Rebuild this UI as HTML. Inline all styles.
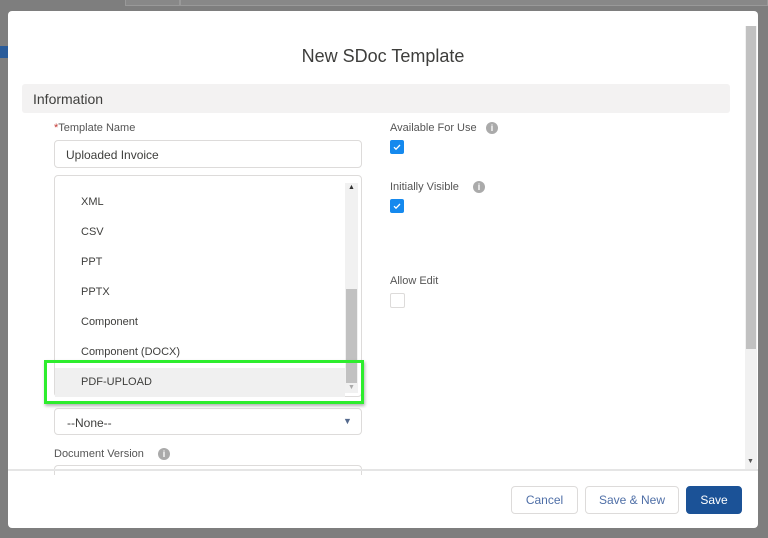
<!DOCTYPE html>
<html><head><style>
*{box-sizing:border-box;margin:0;padding:0}
body{width:768px;height:538px;background:#7e7e7e;font-family:"Liberation Sans",sans-serif;position:relative;overflow:hidden;color:#3e3e3c}
.a{position:absolute}
.modal{left:8px;top:11px;width:750px;height:517px;background:#fff;border-radius:4px}
.lbl{font-size:11px;color:#54698d;color:#555}
.cb{width:14px;height:14px;border-radius:2px;background:#1589ee}
.cb svg{display:block}
.info{width:12px;height:12px;border-radius:50%;background:#aaa;color:#fff;font-size:9px;font-weight:bold;text-align:center;line-height:12px}
.opt{left:81px;font-size:11px;color:#3e3e3c}
.btn{height:28px;border:1px solid #dddbda;border-radius:4px;background:#fff;color:#0070d2;font-size:12px;text-align:center;line-height:26px;color:#4f6fa7}
</style></head><body>
<div class="a" style="left:125px;top:0;width:55px;height:6px;border:1px solid #999;border-top:none;background:#888"></div>
<div class="a" style="left:180px;top:0;width:588px;height:6px;border:1px solid #999;border-top:none;background:#888"></div>
<div class="a modal"></div>
<div class="a" style="left:0;top:46px;width:8px;height:12px;background:#2a5c9a"></div>
<div class="a" style="left:8px;top:46px;width:750px;text-align:center;font-size:18px;color:#3e3e3c">New SDoc Template</div>
<div class="a" style="left:22px;top:84px;width:708px;height:29px;background:#f3f2f2;border-radius:3px"></div>
<div class="a" style="left:33px;top:91px;font-size:14px;color:#3e3e3c">Information</div>
<div class="a" style="left:745px;top:26px;width:12px;height:444px;background:#f1f1f1"></div>
<div class="a" style="left:746px;top:26px;width:10px;height:323px;background:#c1c1c1"></div>
<div class="a" style="left:747px;top:458px;font-size:7px;color:#555">▼</div>
<div class="a lbl" style="left:54px;top:122px"><span style="color:#c23934">*</span>Template Name</div>
<div class="a" style="left:54px;top:140px;width:308px;height:28px;border:1px solid #dddbda;border-radius:4px;font-size:12px;padding:7px 0 0 11px;color:#3e3e3c">Uploaded Invoice</div>
<div class="a" style="left:54px;top:175px;width:308px;height:222px;border:1px solid #dddbda;border-radius:4px;background:#fff"></div>
<div class="a" style="left:345px;top:183px;width:13px;height:210px;background:#f1f1f1"></div>
<div class="a" style="left:346px;top:289px;width:11px;height:94px;background:#c1c1c1"></div>
<div class="a" style="left:348px;top:184px;font-size:7px;color:#333">▲</div>
<div class="a" style="left:348px;top:384px;font-size:7px;color:#aaa">▼</div>
<div class="a opt" style="top:196px">XML</div>
<div class="a opt" style="top:226px">CSV</div>
<div class="a opt" style="top:256px">PPT</div>
<div class="a opt" style="top:286px">PPTX</div>
<div class="a opt" style="top:316px">Component</div>
<div class="a opt" style="top:346px">Component (DOCX)</div>
<div class="a" style="left:55px;top:368px;width:290px;height:29px;background:#f0f0f0"></div>
<div class="a opt" style="top:376px">PDF-UPLOAD</div>
<div class="a" style="left:44px;top:360px;width:320px;height:44px;border:3px solid #2ded2d;box-shadow:1px 2px 3px rgba(0,0,0,.3)"></div>
<div class="a" style="left:54px;top:408px;width:308px;height:27px;border:1px solid #dddbda;border-radius:4px;font-size:12px;padding:7px 0 0 12px;color:#3e3e3c">--None--</div>
<div class="a" style="left:343px;top:416px;font-size:9px;color:#54698d">▼</div>
<div class="a lbl" style="left:54px;top:448px">Document Version</div>
<div class="a info" style="left:158px;top:448px">i</div>
<div class="a" style="left:54px;top:465px;width:308px;height:10px;border:1px solid #dddbda;border-bottom:none;border-radius:4px 4px 0 0"></div>
<div class="a lbl" style="left:390px;top:122px">Available For Use</div>
<div class="a info" style="left:486px;top:122px">i</div>
<div class="a cb" style="left:390px;top:140px"><svg width="14" height="14"><path d="M4 7.2l2 2 4-4.2" stroke="#fff" stroke-width="1.3" fill="none"/></svg></div>
<div class="a lbl" style="left:390px;top:181px">Initially Visible</div>
<div class="a info" style="left:473px;top:181px">i</div>
<div class="a cb" style="left:390px;top:199px"><svg width="14" height="14"><path d="M4 7.2l2 2 4-4.2" stroke="#fff" stroke-width="1.3" fill="none"/></svg></div>
<div class="a lbl" style="left:390px;top:275px">Allow Edit</div>
<div class="a" style="left:390px;top:293px;width:15px;height:15px;border:1px solid #dddbda;border-radius:2px"></div>
<div class="a" style="left:8px;top:469px;width:750px;height:2px;background:#e5e5e5"></div>
<div class="a btn" style="left:511px;top:486px;width:67px">Cancel</div>
<div class="a btn" style="left:585px;top:486px;width:94px">Save &amp; New</div>
<div class="a btn" style="left:686px;top:486px;width:56px;background:#1b5297;border-color:#1b5297;color:#fff">Save</div>
</body></html>
